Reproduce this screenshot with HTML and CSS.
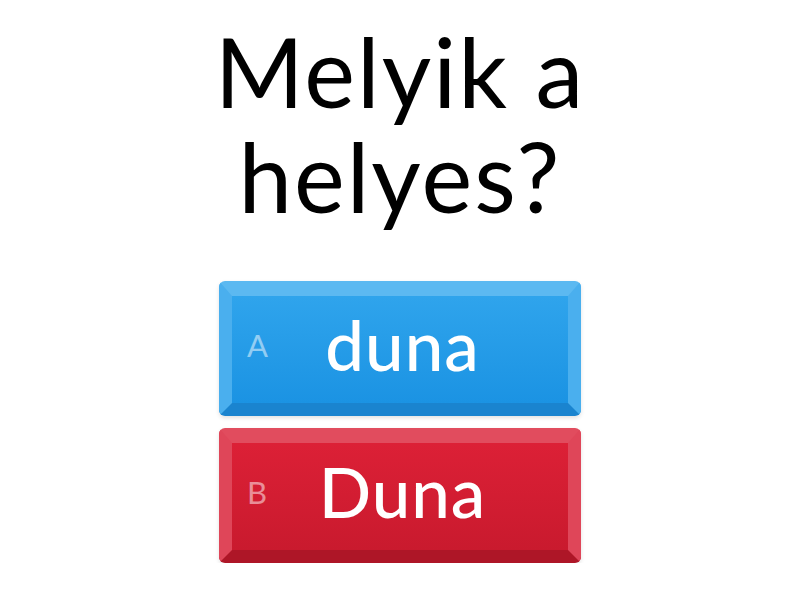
FILE: index.html
```html
<!DOCTYPE html>
<html lang="hu">
<head>
  <meta charset="UTF-8">
  <meta name="viewport" content="width=device-width, initial-scale=1.0">
  <title>Melyik a helyes?</title>
  <link rel="stylesheet" href="styles.css">
</head>
<body>
  <div class="quiz">
    <h1 class="question">Melyik a<br>helyes?</h1>

    <!-- válaszgombok -->
    <div class="answers">
      <button class="answer blue">
        <span class="key">A</span>
        <span class="label">duna</span>
      </button>
      <button class="answer red">
        <span class="key">B</span>
        <span class="label">Duna</span>
      </button>
    </div>
  </div>
</body>
</html>
```

FILE: styles.css
```css
body {
  margin: 0;
  background: #fff;
  font-family: Lato, "Open Sans", sans-serif;
}
.quiz {
  display: flex;
  flex-direction: column;
  align-items: center;
  padding-top: 18px;
}
.question {
  margin: 0;
  font-size: 96px;
  line-height: 105px;
  font-weight: 400;
  letter-spacing: 2px;
  color: #000;
  text-align: center;
}
.answers {
  display: flex;
  flex-direction: column;
  gap: 12px;
  margin-top: 53px;
}
.answer {
  display: flex;
  align-items: center;
  width: 362px;
  height: 135px;
  padding: 0 0 0 15px;
  border-style: solid;
  border-width: 15px 13px 13px 13px;
  border-radius: 6px;
  font-family: inherit;
  cursor: pointer;
  position: relative;
  box-shadow: 0 2px 4px rgba(0, 0, 0, 0.12);
}
.answer .key {
  width: 40px;
  font-size: 31px;
  color: rgba(255, 255, 255, 0.5);
  text-align: left;
  margin-top: -10px;
}
.answer .label {
  flex: 1;
  font-size: 69px;
  font-weight: 500;
  letter-spacing: 1px;
  color: #fff;
  text-align: center;
  padding-right: 50px;
  margin-top: -10px;
}
.blue {
  border-color: #5cb9f1 #4aafee #1a84cf #4aafee;
  background: linear-gradient(#2fa4ec, #1b93e3);
}
.red {
  border-color: #e14c5e #df4659 #ae1627 #df4659;
  background: linear-gradient(#dc2036, #c91a2e);
}
```
